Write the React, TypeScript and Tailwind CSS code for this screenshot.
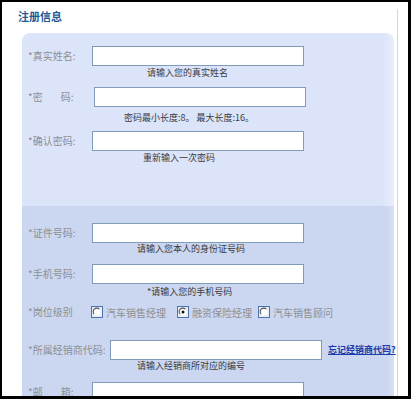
import React from "react";

const Input = ({ extra = "" }: { extra?: string }) => (
  <div className={`h-[20px] w-[212px] shrink-0 border border-[#7f9db9] bg-white ${extra}`} />
);

const Label = ({ children, w = "w-[70px]" }: { children: React.ReactNode; w?: string }) => (
  <div className={`${w} shrink-0 pl-[6px] text-[10px] leading-[20px] text-[#8f8f8f] whitespace-nowrap`}>
    {children}
  </div>
);

const Hint = ({ children, cls }: { children: React.ReactNode; cls: string }) => (
  <div className={`text-[9px] text-[#3a3a3a] whitespace-nowrap ${cls}`}>{children}</div>
);

const Radio = ({ checked }: { checked?: boolean }) => (
  <svg width="12" height="12" viewBox="0 0 12 12" className="shrink-0">
    <rect x="0.5" y="0.5" width="11" height="11" fill="#e9edf6" stroke="#4d72b0" />
    <circle cx="6" cy="6" r="3.6" fill="#ffffff" />
    <path d="M3.2 8.2 A3.6 3.6 0 0 1 8.4 3.2" fill="none" stroke="#555" strokeWidth="1.1" />
    {checked && <circle cx="6" cy="6" r="1.5" fill="#111" />}
  </svg>
);

export default function App() {
  return (
    <div className="w-[411px] h-[399px] overflow-hidden bg-white border-l-[2px] border-t-[2px] border-r-[3px] border-b-[3px] border-black font-['Noto_Sans_CJK_SC',sans-serif]">
      <div className="w-[396px] h-full border-r border-[#d6d6d6]">
        <div className="mt-[7px] pl-[16px] text-[11px] leading-[14px] font-bold text-[#1d5a96]">注册信息</div>

        <div className="ml-[20px] mt-[10px] w-[372px] h-[173px] rounded-t-[8px] bg-[linear-gradient(to_right,#dce4fa_97%,#e9eefc)] pt-[13px]">
          <div className="flex h-[20px] items-center">
            <Label>*真实姓名:</Label>
            <Input />
          </div>
          <Hint cls="h-[14px] leading-[14px] pl-[125px]">请输入您的真实姓名</Hint>

          <div className="mt-[7px] flex h-[20px] items-center">
            <Label>
              *密<span className="inline-block w-[18px]" />码:
            </Label>
            <Input extra="ml-[2px]" />
          </div>
          <Hint cls="mt-[4px] h-[14px] leading-[14px] pl-[102px]">密码最小长度:8。 最大长度:16。</Hint>

          <div className="mt-[6px] flex h-[20px] items-center">
            <Label>*确认密码:</Label>
            <Input />
          </div>
          <Hint cls="h-[14px] leading-[14px] pl-[121px]">重新输入一次密码</Hint>
        </div>

        <div className="ml-[20px] w-[372px] bg-[linear-gradient(to_right,#cbd7f1_98%,#d6e0f5)] pt-[17px] pb-[20px]">
          <div className="flex h-[20px] items-center">
            <Label>*证件号码:</Label>
            <Input />
          </div>
          <Hint cls="h-[12px] leading-[12px] pl-[115px]">请输入您本人的身份证号码</Hint>

          <div className="mt-[9px] flex h-[20px] items-center">
            <Label>*手机号码:</Label>
            <Input />
          </div>
          <Hint cls="mt-[2px] h-[12px] leading-[12px] pl-[125px]">*请输入您的手机号码</Hint>

          <div className="mt-[4px] flex h-[20px] items-center">
            <Label w="w-[69px]">*岗位级别</Label>
            <div className="flex w-[86px] items-center">
              <Radio />
              <span className="ml-[3px] text-[10px] text-[#8f8f8f] whitespace-nowrap">汽车销售经理</span>
            </div>
            <div className="flex w-[81px] items-center">
              <Radio checked />
              <span className="ml-[3px] text-[10px] text-[#8f8f8f] whitespace-nowrap">融资保险经理</span>
            </div>
            <div className="flex items-center">
              <Radio />
              <span className="ml-[3px] text-[10px] text-[#8f8f8f] whitespace-nowrap">汽车销售顾问</span>
            </div>
          </div>

          <div className="mt-[18px] flex h-[20px] items-center">
            <Label w="w-[88px]">*所属经销商代码:</Label>
            <Input />
            <a className="ml-[6px] text-[9px] font-bold text-[#1b3ca8] underline whitespace-nowrap">忘记经销商代码?</a>
          </div>
          <Hint cls="h-[12px] leading-[12px] pl-[115px]">请输入经销商所对应的编号</Hint>

          <div className="mt-[10px] flex h-[20px] items-center">
            <Label>
              *邮<span className="inline-block w-[18px]" />箱:
            </Label>
            <Input />
          </div>
        </div>
      </div>
    </div>
  );
}
